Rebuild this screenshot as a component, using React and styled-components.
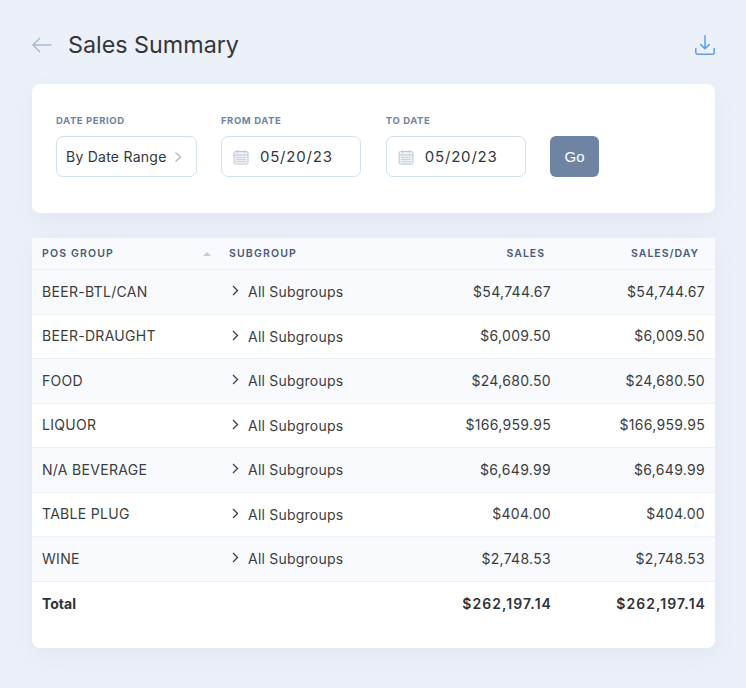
import React from "react";
import styled, { createGlobalStyle } from "styled-components";

const Global = createGlobalStyle`
  html, body { margin: 0; padding: 0; background: #ecf0f9; }
  body { font-family: "Inter", "Liberation Sans", sans-serif; color: #34373c; }
`;

const Page = styled.div`
  width: 746px;
  height: 688px;
  box-sizing: border-box;
  padding: 26px 31px 0 32px;
  overflow: hidden;
`;

const Header = styled.header`
  display: flex;
  align-items: center;
  height: 38px;
  margin-bottom: 20px;
`;

const BackIcon = styled.svg`
  width: 20px;
  height: 16px;
  margin-right: 16px;
  flex: none;
`;

const Title = styled.h1`
  flex: 1;
  margin: 0;
  font-size: 23.3px;
  line-height: 38px;
  font-weight: 400;
  color: #33363b;
`;

const DownloadIcon = styled.svg`
  width: 20px;
  height: 20px;
  flex: none;
`;

const FilterCard = styled.section`
  display: flex;
  align-items: flex-end;
  height: 129px;
  box-sizing: border-box;
  padding: 31px 24px 36px;
  margin-bottom: 25px;
  background: #fff;
  border-radius: 8px;
  box-shadow: 0 8px 24px rgba(90, 110, 160, 0.07);
`;

const Field = styled.div`
  display: flex;
  flex-direction: column;
  width: 140.6px;
  margin-right: 24.3px;
`;

const Label = styled.label`
  height: 21px;
  font-size: 9.5px;
  line-height: 12px;
  font-weight: 700;
  letter-spacing: 0.6px;
  color: #6f84a3;
`;

const Control = styled.div`
  display: flex;
  align-items: center;
  height: 41px;
  box-sizing: border-box;
  padding: 0 9px;
  border: 1px solid #d3e0ee;
  border-radius: 7px;
  background: #fff;
  font-size: 14px;
  letter-spacing: 0.25px;
  color: #34373c;
`;

const DateText = styled.span`
  font-size: 15px;
  letter-spacing: 0.8px;
  margin-left: 2px;
`;

const ChevronGrey = styled.svg`
  width: 8px;
  height: 12px;
  margin-left: 7px;
`;

const CalIcon = styled.svg`
  width: 16px;
  height: 16px;
  margin: 0 9px 0 2px;
  flex: none;
`;

const GoButton = styled.button`
  width: 49px;
  height: 41px;
  margin-left: -0.7px;
  padding: 0;
  border: 0;
  border-radius: 6px;
  background: #6f84a3;
  color: #fff;
  font-family: "Liberation Sans", sans-serif;
  font-size: 15px;
  font-weight: 400;
`;

const TableCard = styled.section`
  height: 410px;
  background: #fff;
  border-radius: 0 0 8px 8px;
  box-shadow: 0 8px 24px rgba(90, 110, 160, 0.07);
  overflow: hidden;
`;

const grid = `
  display: grid;
  grid-template-columns: 186px 1fr 120px 154px;
  align-items: center;
  box-sizing: border-box;
`;

const HeadRow = styled.div`
  ${grid}
  height: 32px;
  padding-right: 10px;
  background: #f9fafd;
  border-bottom: 1px solid #ecf0f8;
`;

const HeadCell = styled.div`
  position: relative;
  padding-left: ${(p) => (p.$right ? 0 : p.$sub ? 11 : 10)}px;
  font-size: 10.5px;
  font-weight: 600;
  letter-spacing: ${(p) => (p.$right ? 1 : 1.15)}px;
  color: #475b7a;
  text-align: ${(p) => (p.$right ? "right" : "left")};
  padding-right: ${(p) => (p.$right ? 6 : 0)}px;
`;

const SortMark = styled.span`
  position: absolute;
  right: 7px;
  top: 5px;
  width: 0;
  height: 0;
  border-left: 4px solid transparent;
  border-right: 4px solid transparent;
  border-bottom: 4px solid #c5ccd6;
`;

const Row = styled.div`
  ${grid}
  height: 44.5px;
  padding-right: 10px;
  background: ${(p) => (p.$shade ? "#f9fafd" : "#fff")};
  border-bottom: 1px solid #ecf0f8;
  font-size: 14px;
  letter-spacing: 0.3px;
  color: #3a3d42;
`;

const TotalRow = styled(Row)`
  border-bottom: 0;
  font-weight: 700;
  letter-spacing: 0;
  color: #2f3237;
`;

const TotalAmount = styled.div`
  text-align: right;
  letter-spacing: 1.05px;
  font-weight: 600;
  padding-bottom: 1px;
  margin-right: -1px;
`;

const GroupCell = styled.div`
  padding: 0 0 1px 10px;
`;

const SubCell = styled.div`
  display: flex;
  align-items: center;
  padding-left: 14px;
  letter-spacing: 0.22px;
`;

const ChevronDark = styled.svg`
  width: 7px;
  height: 11px;
  margin-right: 9px;
  margin-top: -2px;
`;

const Amount = styled.div`
  text-align: right;
  padding-bottom: 1px;
`;

const rows = [
  ["BEER-BTL/CAN", "$54,744.67"],
  ["BEER-DRAUGHT", "$6,009.50"],
  ["FOOD", "$24,680.50"],
  ["LIQUOR", "$166,959.95"],
  ["N/A BEVERAGE", "$6,649.99"],
  ["TABLE PLUG", "$404.00"],
  ["WINE", "$2,748.53"],
];

const Calendar = () => (
  <CalIcon viewBox="0 0 16 16" fill="none">
    <rect x="1" y="2.5" width="14" height="12.5" rx="1.5" fill="#eef1f6" stroke="#bcc8d6" />
    <path d="M1 6h14" stroke="#bcc8d6" />
    <path d="M4.5 1v3M11.5 1v3" stroke="#bcc8d6" />
    <path d="M3.5 8.5h9M3.5 10.5h9M3.5 12.5h9" stroke="#a9b5c4" strokeDasharray="1 1" />
  </CalIcon>
);

export default function App() {
  return (
    <Page>
      <Global />
      <Header>
        <BackIcon viewBox="0 0 20 16" fill="none" stroke="#a9bbcd" strokeWidth="1.5">
          <path d="M19.5 8H1M8 1 1 8l7 7" />
        </BackIcon>
        <Title>Sales Summary</Title>
        <DownloadIcon viewBox="0 0 20 20" fill="none" stroke="#5e9fe8" strokeWidth="1.5" strokeLinecap="round" strokeLinejoin="round">
          <path d="M10 .8v13M5.8 9.6l4.2 4.2 4.2-4.2" />
          <path d="M.8 13.5v3.7a2 2 0 0 0 2 2h14.4a2 2 0 0 0 2-2v-3.7" />
        </DownloadIcon>
      </Header>
      <FilterCard>
        <Field>
          <Label>DATE PERIOD</Label>
          <Control>
            By Date Range
            <ChevronGrey viewBox="0 0 8 12" fill="none" stroke="#b5b9bf" strokeWidth="1.3">
              <path d="m1.5 1.5 5 4.5-5 4.5" />
            </ChevronGrey>
          </Control>
        </Field>
        <Field>
          <Label>FROM DATE</Label>
          <Control>
            <Calendar />
            <DateText>05/20/23</DateText>
          </Control>
        </Field>
        <Field>
          <Label>TO DATE</Label>
          <Control>
            <Calendar />
            <DateText>05/20/23</DateText>
          </Control>
        </Field>
        <GoButton>Go</GoButton>
      </FilterCard>
      <TableCard>
        <HeadRow>
          <HeadCell>
            POS GROUP
            <SortMark />
          </HeadCell>
          <HeadCell $sub>SUBGROUP</HeadCell>
          <HeadCell $right>SALES</HeadCell>
          <HeadCell $right>SALES/DAY</HeadCell>
        </HeadRow>
        {rows.map(([name, amount], i) => (
          <Row key={name} $shade={i % 2 === 0}>
            <GroupCell>{name}</GroupCell>
            <SubCell>
              <ChevronDark viewBox="0 0 7 11" fill="none" stroke="#3a3d42" strokeWidth="1.3">
                <path d="m1 1 4.5 4.5L1 10" />
              </ChevronDark>
              All Subgroups
            </SubCell>
            <Amount>{amount}</Amount>
            <Amount>{amount}</Amount>
          </Row>
        ))}
        <TotalRow>
          <GroupCell>Total</GroupCell>
          <div />
          <TotalAmount>$262,197.14</TotalAmount>
          <TotalAmount>$262,197.14</TotalAmount>
        </TotalRow>
      </TableCard>
    </Page>
  );
}
